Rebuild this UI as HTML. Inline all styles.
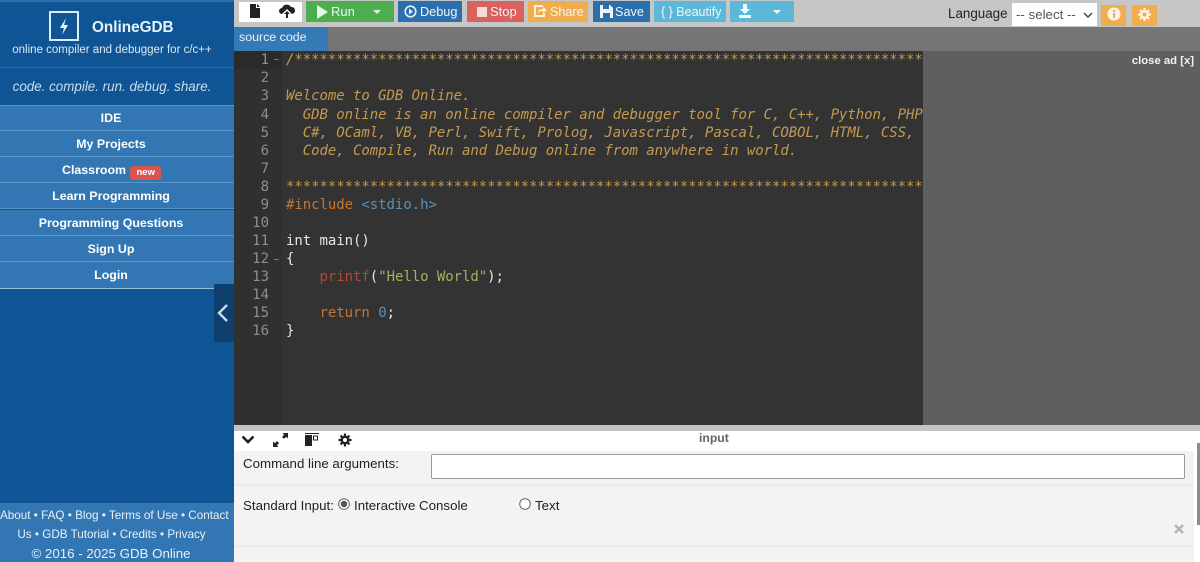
<!DOCTYPE html>
<html><head><meta charset="utf-8"><style>
*{box-sizing:border-box}
html,body{margin:0;padding:0;width:1200px;height:562px;overflow:hidden;background:#fff;font-family:"Liberation Sans",sans-serif}
.a{position:absolute}
#side{left:0;top:0;width:234px;height:562px;background:#0f5596;color:#fff}
.m{position:absolute;left:0;width:234px;height:26px;background:#3277b3;border-bottom:1px solid #5b95c6;color:#fff;font-weight:bold;font-size:12.4px;line-height:26px;text-align:center;padding-right:12px}
.foot{position:absolute;left:0;top:503px;width:234px;height:59px;background:#3277b3;color:#e8f0f7;text-align:center}
.b{position:absolute;top:1px;height:21px;color:#f2f5f7;font-size:12.7px;line-height:22px;white-space:nowrap;text-align:left}
.code{position:absolute;left:286px;font:14px/18px "DejaVu Sans Mono",monospace;letter-spacing:-.05px;white-space:pre;color:#e6e6e6}
.n{position:absolute;left:234px;width:35px;text-align:right;font:14px/18px "DejaVu Sans Mono",monospace;color:#8f8f8f}
.c{color:#c59a4e;font-style:italic}
</style></head><body>
<div class="a" id="side">
<div class="a" style="left:0;top:0;width:234px;height:2px;background:#2b6ea8"></div>
<svg class="a" style="left:49px;top:11px" width="31" height="31" viewBox="0 0 31 31"><rect x="1" y="1" width="28" height="28" fill="none" stroke="#d9f0fb" stroke-width="2"/><path d="M17 7l-6 10h4l-2 7 6-10h-4z" fill="#e6f5fc"/></svg>
<div class="a" style="left:92px;top:19px;font-size:15.3px;font-weight:bold;color:#e6f2f9;line-height:18px">OnlineGDB</div>
<div class="a" style="left:0;top:43px;width:224px;text-align:center;font-size:11.5px;line-height:14px;color:#dce9f3;white-space:nowrap">online compiler and debugger for c/c++</div>
<div class="a" style="left:0;top:67px;width:234px;height:1px;background:#2e6ea8"></div>
<div class="a" style="left:0;top:79px;width:224px;text-align:center;font-size:13.4px;font-style:italic;line-height:16px;color:#c9deed;white-space:nowrap">code. compile. run. debug. share.</div>
<div class="m" style="top:105px;height:26px;border-top:1px solid #5b95c6;line-height:24px">IDE</div>
<div class="m" style="top:131px">My Projects</div>
<div class="m" style="top:157px;text-align:left;padding-left:62px;padding-right:0">Classroom <span style="display:inline-block;background:#d9534f;border-radius:3px;font-size:9.5px;line-height:14px;height:14px;padding:0 6px;vertical-align:-1px;margin-left:1px">new</span></div>
<div class="m" style="top:183px">Learn Programming</div>
<div class="m" style="top:210px">Programming Questions</div>
<div class="m" style="top:236px">Sign Up</div>
<div class="m" style="top:262px;height:27px;border-bottom-color:#9cbfdc">Login</div>
<div class="a" style="left:214px;top:284px;width:20px;height:58px;background:#0e3f6e"></div>
<svg class="a" style="left:216px;top:303px" width="14" height="20" viewBox="0 0 14 20"><path d="M11 2L3 10l8 8" fill="none" stroke="#c8dcec" stroke-width="2.4"/></svg>
<div class="foot">
<div class="a" style="left:0;top:6px;width:228px;font-size:11.7px;line-height:14px;white-space:nowrap">About • FAQ • Blog • Terms of Use • Contact</div>
<div class="a" style="left:0;top:25px;width:223px;font-size:11.7px;line-height:14px;white-space:nowrap">Us • GDB Tutorial • Credits • Privacy</div>
<div class="a" style="left:0;top:43px;width:222px;font-size:13.3px;line-height:15px;white-space:nowrap">© 2016 - 2025 GDB Online</div>
</div>
</div>

<div class="a" style="left:234px;top:0;width:966px;height:27px;background:#c6c6c6"></div>
<div class="a" style="left:239px;top:2px;width:63px;height:20px;background:#fff"></div>
<svg class="a" style="left:249px;top:4px" width="12" height="15" viewBox="0 0 12 15"><path d="M1 0h6v4h4v10H1zM8 0l3 3H8z" fill="#222"/></svg>
<svg class="a" style="left:279px;top:4px" width="16" height="15" viewBox="0 0 16 15"><path d="M3 10a3 3 0 0 1 0-6 5 5 0 0 1 9-1 3.500 3.500 0 0 1 1 7z" fill="#222"/><path d="M8 5l5 5h-3v5H6v-5H3z" fill="#fff"/><path d="M8 7l3 3H9v4H7v-4H5z" fill="#222"/></svg>

<div class="b" style="left:306px;width:88px;background:#4cae4f;padding-left:25px;font-size:13px">Run</div>
<svg class="a" style="left:317px;top:5px" width="12" height="14"><path d="M0 0l11 7-11 7z" fill="#e8f5e9"/></svg>
<svg class="a" style="left:373px;top:10px" width="8" height="5"><path d="M0 0h8L4 4z" fill="#dff0df"/></svg>

<div class="b" style="left:398px;width:64px;background:#2c6fad;padding-left:22px">Debug</div>
<svg class="a" style="left:404px;top:5px" width="13" height="13"><circle cx="6.500" cy="6.500" r="5.300" fill="none" stroke="#e8f0f7" stroke-width="1.600"/><path d="M5 3.500l4 3-4 3z" fill="#e8f0f7"/></svg>

<div class="b" style="left:467px;width:57px;background:#d9615e;padding-left:23px;font-size:13px">Stop</div>
<div class="a" style="left:477px;top:7px;width:10px;height:10px;background:#f5dcdb"></div>

<div class="b" style="left:528px;width:60px;background:#f0ad4e;padding-left:22px;font-size:12.6px">Share</div>
<svg class="a" style="left:533px;top:5px" width="14" height="13" viewBox="0 0 14 13"><path d="M10 1H2v10h9V8" fill="none" stroke="#fdf3e2" stroke-width="2"/><path d="M5 8c0-3 3-4 5-4V2l4 3-4 3V6C8 6 6 6 5 8z" fill="#fdf3e2"/></svg>

<div class="b" style="left:593px;width:57px;background:#2c6fad;padding-left:22px">Save</div>
<svg class="a" style="left:600px;top:5px" width="13" height="13" viewBox="0 0 13 13"><path d="M0 0h10l3 3v10H0z" fill="#eef4f9"/><rect x="3" y="0" width="6" height="4" fill="#2c6fad"/><rect x="3" y="8" width="7" height="5" fill="#2c6fad"/></svg>

<div class="b" style="left:654px;width:72px;background:#5bb8d8;padding-left:7px;font-size:12.5px">{ } Beautify</div>

<div class="b" style="left:730px;width:64px;background:#5bb8d8"></div>
<svg class="a" style="left:738px;top:4px" width="14" height="14" viewBox="0 0 14 14"><path d="M5 0h4v5h3L7 10 2 5h3zM1 11h12v3H1z" fill="#f2fafd"/></svg>
<svg class="a" style="left:773px;top:10px" width="8" height="5"><path d="M0 0h8L4 4z" fill="#eef8fb"/></svg>

<div class="a" style="left:948px;top:6px;font-size:13.4px;line-height:16px;color:#222">Language</div>
<div class="a" style="left:1012px;top:3px;width:85px;height:23px;background:#fff;font-size:13.3px;line-height:23px;padding-left:4px;color:#555;white-space:nowrap">-- select --</div>
<svg class="a" style="left:1083px;top:12px" width="10" height="6"><path d="M1 1l4 4 4-4" fill="none" stroke="#444" stroke-width="1.500"/></svg>
<div class="a" style="left:1101px;top:5px;width:25px;height:21px;background:#f0ad4e"></div>
<svg class="a" style="left:1107px;top:7px" width="14" height="14"><circle cx="7" cy="7" r="6.500" fill="#fdf4e6"/><rect x="6" y="6" width="2.200" height="5" fill="#f0ad4e"/><rect x="6" y="3" width="2.200" height="2" fill="#f0ad4e"/></svg>
<div class="a" style="left:1132px;top:5px;width:25px;height:21px;background:#f0ad4e"></div>
<svg class="a" style="left:1137px;top:7px" width="15" height="15" viewBox="0 0 15 15"><path d="M7.500 1v13M1 7.500h13M3 3l9 9M12 3l-9 9" stroke="#fdf4e6" stroke-width="2.200"/><circle cx="7.500" cy="7.500" r="4.500" fill="#fdf4e6"/><circle cx="7.500" cy="7.500" r="2" fill="#f0ad4e"/></svg>

<div class="a" style="left:234px;top:27px;width:966px;height:24px;background:#757575"></div>
<div class="a" style="left:234px;top:27px;width:94px;height:24px;background:#337ab7;color:#eaf2f8;font-size:12.4px;line-height:21px;padding-left:5px">source code</div>

<div class="a" style="left:234px;top:51px;width:689px;height:374px;background:#333"></div>
<div class="a" style="left:234px;top:51px;width:48px;height:374px;background:#2f3030"></div>
<div class="a" style="left:234px;top:51px;width:48px;height:18px;background:#2a2a2a"></div>
<div class="a" style="left:923px;top:51px;width:277px;height:374px;background:#5f5f5f"></div>
<div class="a" style="left:1100px;top:54px;width:94px;text-align:right;color:#f2f2f2;font-size:11.3px;font-weight:bold;line-height:14px">close ad [x]</div>

<div class="n" style="top:51px">1</div><div class="n" style="top:69px">2</div><div class="n" style="top:87px">3</div><div class="n" style="top:106px">4</div><div class="n" style="top:124px">5</div><div class="n" style="top:142px">6</div><div class="n" style="top:160px">7</div><div class="n" style="top:178px">8</div><div class="n" style="top:196px">9</div><div class="n" style="top:214px">10</div><div class="n" style="top:232px">11</div><div class="n" style="top:250px">12</div><div class="n" style="top:268px">13</div><div class="n" style="top:286px">14</div><div class="n" style="top:304px">15</div><div class="n" style="top:322px">16</div>
<div class="a" style="left:274px;top:59px;width:5px;height:1px;background:#777"></div>
<div class="a" style="left:274px;top:259px;width:5px;height:1px;background:#777"></div>

<div class="a" style="left:234px;top:51px;width:689px;height:374px;overflow:hidden">
<div class="code c" style="left:52px;top:0">/************************************************************************************************</div>
<div class="code c" style="left:52px;top:36px">Welcome to GDB Online.</div>
<div class="code c" style="left:52px;top:55px">  GDB online is an online compiler and debugger tool for C, C++, Python, PHP, Ruby,</div>
<div class="code c" style="left:52px;top:73px">  C#, OCaml, VB, Perl, Swift, Prolog, Javascript, Pascal, COBOL, HTML, CSS,</div>
<div class="code c" style="left:52px;top:91px">  Code, Compile, Run and Debug online from anywhere in world.</div>
<div class="code c" style="left:52px;top:127px">*************************************************************************************************</div>
<div class="code" style="left:52px;top:145px"><span style="color:#c5762f">#include</span> <span style="color:#5d8fb5">&lt;stdio.h&gt;</span></div>
<div class="code" style="left:52px;top:181px">int main()</div>
<div class="code" style="left:52px;top:199px">{</div>
<div class="code" style="left:52px;top:217px">    <span style="color:#b5472f">printf</span>(<span style="color:#a0b45a">"Hello World"</span>);</div>
<div class="code" style="left:52px;top:253px">    <span style="color:#c5762f">return</span> <span style="color:#5d8fb5">0</span>;</div>
<div class="code" style="left:52px;top:271px">}</div>
</div>

<div class="a" style="left:234px;top:425px;width:966px;height:6px;background:#c4c4c4"></div>
<div class="a" style="left:234px;top:431px;width:966px;height:131px;background:#fff"></div>
<div class="a" style="left:234px;top:451px;width:960px;height:111px;background:#f3f3f3"></div>
<div class="a" style="left:234px;top:484px;width:960px;height:2px;background:#ececec"></div>
<div class="a" style="left:234px;top:546px;width:960px;height:1px;background:#e6e6e6"></div>
<div class="a" style="left:1197px;top:443px;width:3px;height:82px;background:#8c8c8c"></div>

<svg class="a" style="left:241px;top:435px" width="14" height="10"><path d="M1.500 1.500L7 7l5.500-5.500" fill="none" stroke="#222" stroke-width="2.600"/></svg>
<svg class="a" style="left:273px;top:433px" width="15" height="14" viewBox="0 0 15 14"><path d="M9.500 0H15v5.500l-1.800-1.800-2.200 2.200-2-2 2.200-2.200zM0 14V8.500l1.800 1.800L4 8.100l2 2-2.200 2.200L5.500 14z" fill="#222"/></svg>
<svg class="a" style="left:305px;top:433px" width="14" height="14" viewBox="0 0 14 14"><path d="M0 0h14v1H0zM0 2h7v11H0z" fill="#222"/><rect x="8.500" y="3" width="4" height="4" fill="none" stroke="#222"/></svg>
<svg class="a" style="left:338px;top:433px" width="14" height="14" viewBox="0 0 14 14"><path d="M7 .500v13M.5 7h13M2.500 2.500l9 9M11.500 2.500l-9 9" stroke="#222" stroke-width="2.200"/><circle cx="7" cy="7" r="4.500" fill="#222"/><circle cx="7" cy="7" r="2" fill="#fff"/></svg>
<div class="a" style="left:699px;top:431px;font-size:12.2px;font-weight:bold;line-height:14px;color:#666">input</div>

<div class="a" style="left:243px;top:456px;font-size:13.3px;line-height:16px;color:#222">Command line arguments:</div>
<div class="a" style="left:431px;top:454px;width:754px;height:25px;background:#fff;border:1px solid #9a9a9a;border-radius:2px"></div>
<div class="a" style="left:243px;top:498px;font-size:13.3px;line-height:16px;color:#222">Standard Input:</div>
<svg class="a" style="left:338px;top:498px" width="12" height="12"><circle cx="6" cy="6" r="5.300" fill="#fff" stroke="#666"/><circle cx="6" cy="6" r="3.200" fill="#555"/></svg>
<div class="a" style="left:354px;top:498px;font-size:13.3px;line-height:16px;color:#222">Interactive Console</div>
<svg class="a" style="left:519px;top:498px" width="12" height="12"><circle cx="6" cy="6" r="5.300" fill="#fff" stroke="#666"/></svg>
<div class="a" style="left:535px;top:498px;font-size:13.3px;line-height:16px;color:#222">Text</div>
<svg class="a" style="left:1174px;top:524px" width="10" height="10"><path d="M1 1l8 8M9 1l-8 8" stroke="#b5b5b5" stroke-width="2.600"/></svg>
</body></html>
